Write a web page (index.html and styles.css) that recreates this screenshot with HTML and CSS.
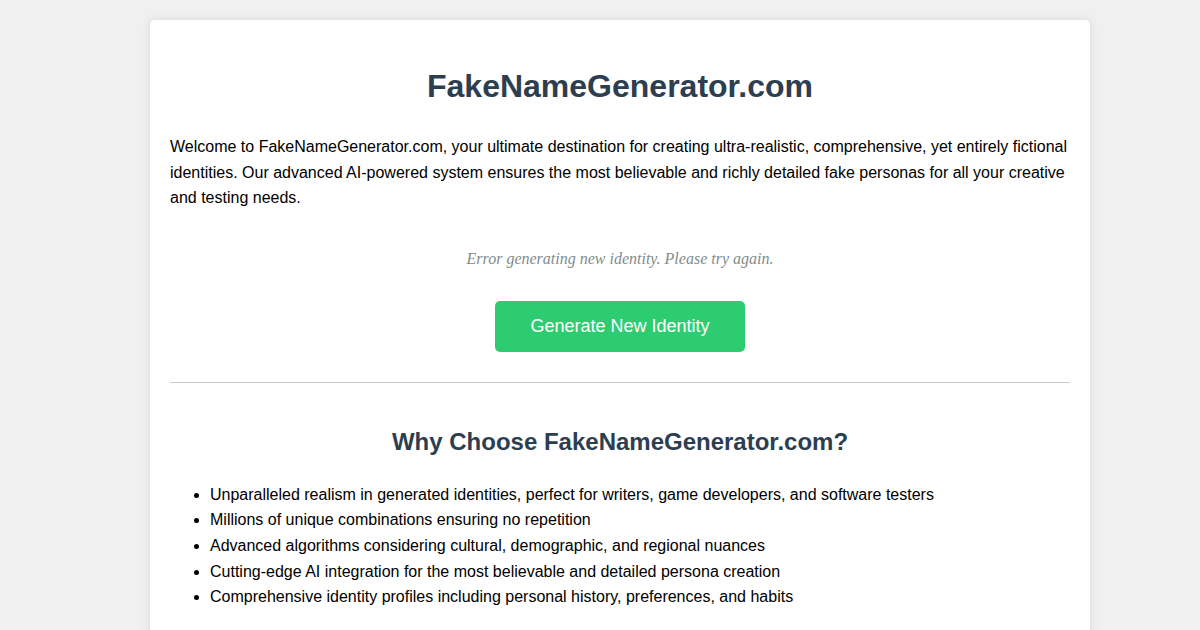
FILE: index.html
```html
<!DOCTYPE html>
<html lang="en">
<head>
<meta charset="utf-8">
<title>FakeNameGenerator.com</title>
<link rel="stylesheet" href="styles.css">
</head>
<body>
<div class="card">
  <h1 class="title">FakeNameGenerator.com</h1>
  <p class="intro">Welcome to FakeNameGenerator.com, your ultimate destination for creating ultra-realistic, comprehensive, yet entirely fictional identities. Our advanced AI-powered system ensures the most believable and richly detailed fake personas for all your creative and testing needs.</p>
  <div class="result">
    <p class="error">Error generating new identity. Please try again.</p>
  </div>
  <div class="actions">
    <button class="generate">Generate New Identity</button>
  </div>
  <hr class="divider">
  <section class="features">
    <h2 class="features-title">Why Choose FakeNameGenerator.com?</h2>
    <ul class="feature-list">
      <li>Unparalleled realism in generated identities, perfect for writers, game developers, and software testers</li>
      <li>Millions of unique combinations ensuring no repetition</li>
      <li>Advanced algorithms considering cultural, demographic, and regional nuances</li>
      <li>Cutting-edge AI integration for the most believable and detailed persona creation</li>
      <li>Comprehensive identity profiles including personal history, preferences, and habits</li>
    </ul>
  </section>
</div>
</body>
</html>
```
FILE: styles.css
```css
html { background: #f0f0f0; }
body {
  margin: 0;
  padding: 20px 0;
  background: #f0f0f0;
  font-family: "Liberation Sans", Arial, sans-serif;
  font-size: 16px;
  line-height: 1.6;
  color: #000;
}
.card {
  width: 900px;
  margin: 0 0 0 calc(50% - 450px);
  padding: 20px;
  background: #fff;
  border-radius: 5px;
  box-shadow: 0 0 10px rgba(0,0,0,0.1);
}
.title {
  margin: 21.44px 0;
  font-size: 32px;
  text-align: center;
  color: #2c3e50;
}
.intro { margin: 0; }
.result {
  margin-top: 35px;
  text-align: center;
}
.error {
  margin: 0;
  font-family: "Liberation Serif", "Times New Roman", serif;
  font-style: italic;
  color: #7f8c8d;
}
.actions {
  margin-top: 30px;
  text-align: center;
}
.generate {
  display: inline-block;
  padding: 15px 35px;
  border: none;
  border-radius: 5px;
  background: #2ecc71;
  color: #fff;
  font-family: "Liberation Sans", Arial, sans-serif;
  font-size: 18px;
  line-height: normal;
  cursor: pointer;
}
.divider {
  margin: 30px 0 0;
  border: none;
  border-top: 1px solid #ccc;
}
.features { margin-top: 40px; }
.features-title {
  margin: 0;
  font-size: 24px;
  text-align: center;
  color: #2c3e50;
}
.feature-list {
  margin: 20px 0 16px;
  padding-left: 40px;
}
```
